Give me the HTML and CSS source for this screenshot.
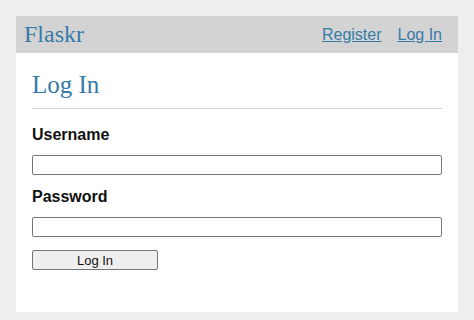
FILE: index.html
```html
<!DOCTYPE html>
<html lang="en">
<head>
  <meta charset="UTF-8" />
  <title>Log In - Flaskr</title>
  <link rel="stylesheet" href="styles.css">
</head>
<body>
  <nav class="nav">
    <h1 class="nav-title"><a href="#">Flaskr</a></h1>
    <ul class="nav-links">
      <li><a href="#">Register</a></li>
      <li><a href="#">Log In</a></li>
    </ul>
  </nav>

  <section class="content">
    <header class="content-header">
      <h1>Log In</h1>
    </header>

    <form class="login-form" method="post">
      <label for="username">Username</label>
      <input type="text" name="username" id="username" required>

      <label for="password">Password</label>
      <input type="password" name="password" id="password" required>

      <input type="submit" value="Log In">
    </form>
  </section>
</body>
</html>
```

FILE: styles.css
```css
html {
  font-family: "Liberation Sans", Arial, sans-serif;
  background: #eee;
  padding: 16px;
  margin: 0;
}

body {
  max-width: 960px;
  margin: 0 auto;
  background: white;
  padding-bottom: 10px;
}

a {
  color: #377ba8;
}

.nav {
  background: lightgray;
  display: flex;
  align-items: center;
  height: 37px;
  padding: 0 8px;
}

.nav-title {
  flex: auto;
  margin: 0;
  font-family: "Liberation Serif", "Times New Roman", serif;
  font-size: 24px;
  font-weight: normal;
}

.nav-title a {
  text-decoration: none;
}

.nav-links {
  display: flex;
  list-style: none;
  margin: 0;
  padding: 0;
}

.nav-links a {
  display: block;
  padding: 8px;
  font-size: 16px;
}

.content {
  padding: 0 16px 16px;
}

.content-header {
  border-bottom: 1px solid lightgray;
  display: flex;
  align-items: flex-end;
}

.content-header h1 {
  flex: auto;
  margin: 18px 0 9px 0;
  font-family: "Liberation Serif", "Times New Roman", serif;
  font-size: 25px;
  line-height: 28px;
  font-weight: normal;
  color: #377ba8;
}

.login-form {
  margin: 17px 0 16px;
  display: flex;
  flex-direction: column;
}

.login-form label {
  font-weight: bold;
  font-size: 16px;
  line-height: 18px;
  color: #111;
  margin-bottom: 11px;
}

.login-form input[type="text"],
.login-form input[type="password"] {
  box-sizing: border-box;
  height: 20px;
  margin: 0 0 13px 0;
  padding: 0 3px;
  border: 1px solid #767676;
  border-radius: 2px;
  background: white;
}

.login-form input[type="submit"] {
  align-self: start;
  box-sizing: border-box;
  width: 126px;
  height: 20px;
  margin: 0;
  padding: 0;
  font-family: "Liberation Sans", Arial, sans-serif;
  font-size: 13px;
  color: #111;
  background: #efefef;
  border: 1px solid #767676;
  border-radius: 2px;
}
```
